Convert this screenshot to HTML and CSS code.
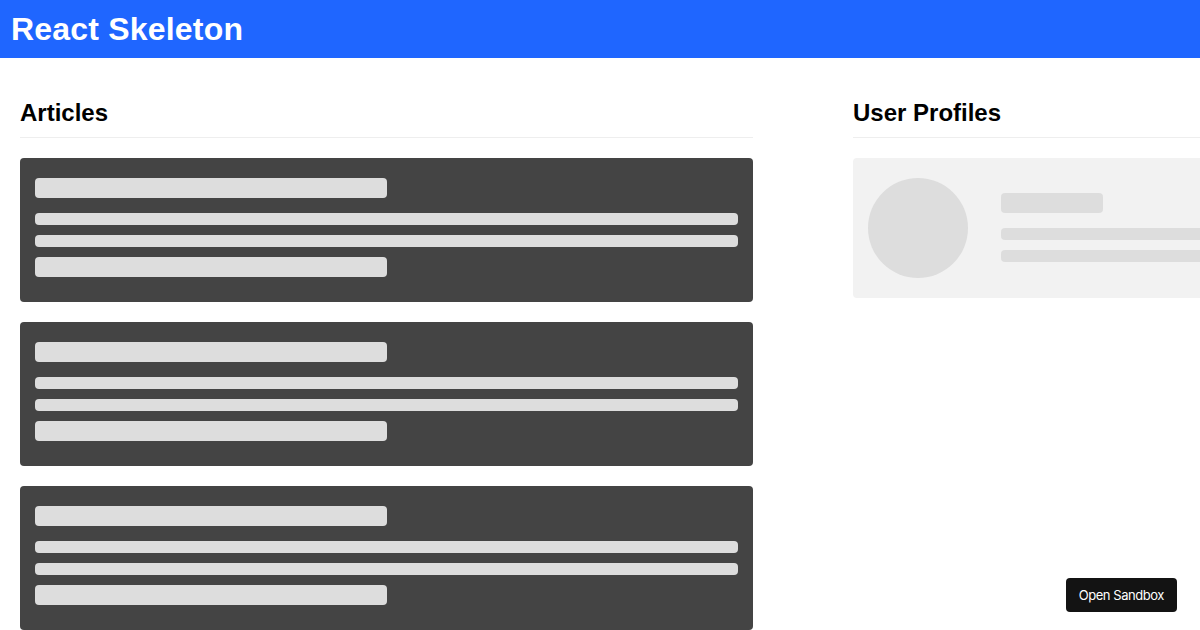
FILE: index.html
```html
<!DOCTYPE html>
<html lang="en">
<head>
<meta charset="utf-8">
<title>React Skeleton</title>
<link rel="stylesheet" href="styles.css">
</head>
<body>
  <header class="topbar">
    <h1 class="brand">React Skeleton</h1>
  </header>
  <main class="content">
    <section class="column">
      <h2 class="column-title">Articles</h2>
      <div class="article-card">
        <div class="sk sk-title"></div>
        <div class="sk sk-text"></div>
        <div class="sk sk-text"></div>
        <div class="sk sk-title sk-last"></div>
      </div>
      <div class="article-card">
        <div class="sk sk-title"></div>
        <div class="sk sk-text"></div>
        <div class="sk sk-text"></div>
        <div class="sk sk-title sk-last"></div>
      </div>
      <div class="article-card">
        <div class="sk sk-title"></div>
        <div class="sk sk-text"></div>
        <div class="sk sk-text"></div>
        <div class="sk sk-title sk-last"></div>
      </div>
    </section>
    <section class="column">
      <h2 class="column-title">User Profiles</h2>
      <div class="profile-card">
        <div class="sk sk-avatar"></div>
        <div class="profile-info">
          <div class="sk sk-name"></div>
          <div class="sk sk-text"></div>
          <div class="sk sk-text"></div>
        </div>
      </div>
    </section>
  </main>
  <a class="sandbox-btn" href="#">Open Sandbox</a>
</body>
</html>
```

FILE: styles.css
```css
html, body {
  margin: 0;
  padding: 0;
  width: 1200px;
  height: 630px;
  overflow: hidden;
  background: #ffffff;
  font-family: "Liberation Sans", Arial, sans-serif;
}

.topbar {
  height: 58px;
  background: #1f66ff;
  display: flex;
  align-items: center;
  padding: 0 11px;
}

.brand {
  margin: 0;
  color: #ffffff;
  font-size: 32px;
  font-weight: 700;
  line-height: 1;
  letter-spacing: 0.2px;
  padding-bottom: 1px;
}

.content {
  display: grid;
  grid-template-columns: 733px 733px;
  column-gap: 100px;
  padding: 0 20px;
  align-items: start;
}

.column {
  min-width: 0;
}

.column-title {
  margin: 41px 0 20px;
  padding-bottom: 10px;
  border-bottom: 1px solid #eeeeee;
  font-size: 24px;
  font-weight: 700;
  line-height: 28px;
  color: #000000;
}

.article-card {
  background: #444444;
  border-radius: 4px;
  padding: 20px 15px 25px;
  margin-bottom: 20px;
}

.sk {
  background: #dddddd;
  border-radius: 4px;
}

.sk-title {
  width: 50%;
  height: 20px;
  margin-bottom: 15px;
}

.sk-text {
  height: 12px;
  margin-bottom: 10px;
}

.sk-last {
  margin-bottom: 0;
}

.profile-card {
  background: #f2f2f2;
  border-radius: 4px;
  padding: 20px 15px;
  display: flex;
  align-items: flex-start;
  gap: 33px;
}

.sk-avatar {
  width: 100px;
  height: 100px;
  border-radius: 50%;
  flex: none;
}

.profile-info {
  flex: 1;
  padding-top: 15px;
}

.sk-name {
  width: 102px;
  height: 20px;
  margin-bottom: 15px;
}

.profile-info .sk-text:last-child {
  margin-bottom: 0;
}

.sandbox-btn {
  position: fixed;
  right: 23px;
  bottom: 18px;
  background: #131313;
  color: #ffffff;
  font-family: Inter, "Liberation Sans", sans-serif;
  font-size: 13px;
  letter-spacing: -0.45px;
  line-height: 34px;
  padding: 0 13px;
  border-radius: 4px;
  text-decoration: none;
}
```
